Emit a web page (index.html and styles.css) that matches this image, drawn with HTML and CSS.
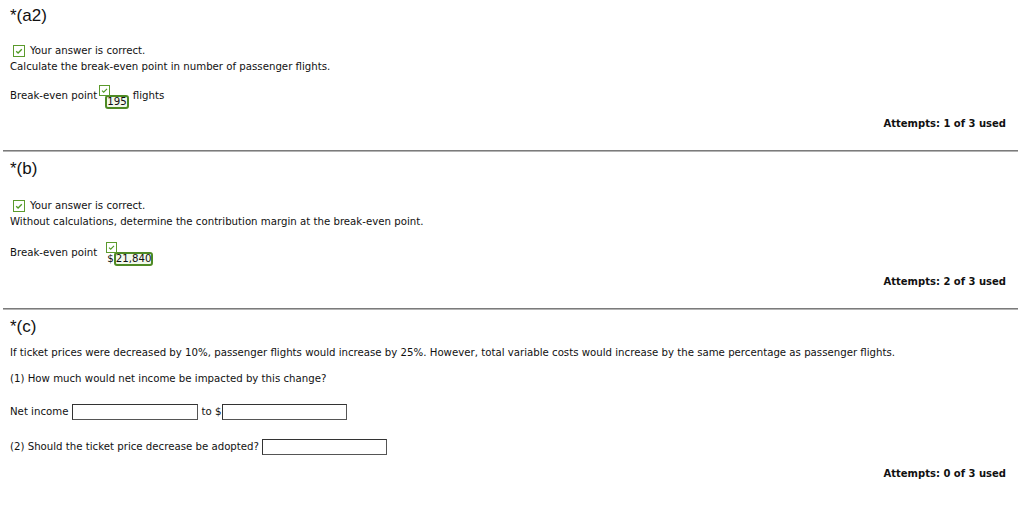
FILE: index.html
```html
<!DOCTYPE html>
<html>
<head>
<meta charset="utf-8">
<link rel="stylesheet" href="styles.css">
</head>
<body>
<div class="part part-a2">
  <h2 class="title">*(a2)</h2>
  <div class="feedback">
    <svg class="fb-check" width="12" height="12" viewBox="0 0 12 12"><rect x="0.5" y="0.5" width="11" height="11" fill="#fff" stroke="#5b9a2c"/><path d="M3.2 6.2 L5.1 8 L8.8 4.2" fill="none" stroke="#4f9a22" stroke-width="1.3"/></svg>
    <span>Your answer is correct.</span>
  </div>
  <div class="question">Calculate the break-even point in number of passenger flights.</div>
  <div class="answer-row"><span class="label">Break-even point</span><span class="ans ans-a2"><svg class="ans-check" width="11" height="11" viewBox="0 0 11 11"><rect x="0.5" y="0.5" width="10" height="10" fill="#fff" stroke="#5b9a2c"/><path d="M3 5.6 L4.7 7.2 L8 3.8" fill="none" stroke="#4f9a22" stroke-width="1.1"/></svg><span class="ans-box">195</span></span><span class="unit">flights</span></div>
  <div class="attempts">Attempts: 1 of 3 used</div>
</div>
<hr class="sep">
<div class="part part-b">
  <h2 class="title">*(b)</h2>
  <div class="feedback">
    <svg class="fb-check" width="12" height="12" viewBox="0 0 12 12"><rect x="0.5" y="0.5" width="11" height="11" fill="#fff" stroke="#5b9a2c"/><path d="M3.2 6.2 L5.1 8 L8.8 4.2" fill="none" stroke="#4f9a22" stroke-width="1.3"/></svg>
    <span>Your answer is correct.</span>
  </div>
  <div class="question">Without calculations, determine the contribution margin at the break-even point.</div>
  <div class="answer-row"><span class="label">Break-even point</span><span class="ans ans-b"><svg class="ans-check" width="11" height="11" viewBox="0 0 11 11"><rect x="0.5" y="0.5" width="10" height="10" fill="#fff" stroke="#5b9a2c"/><path d="M3 5.6 L4.7 7.2 L8 3.8" fill="none" stroke="#4f9a22" stroke-width="1.1"/></svg><span class="dollar">$</span><span class="ans-box">21,840</span></span></div>
  <div class="attempts">Attempts: 2 of 3 used</div>
</div>
<hr class="sep">
<div class="part part-c">
  <h2 class="title">*(c)</h2>
  <div class="para p1">If ticket prices were decreased by 10%, passenger flights would increase by 25%. However, total variable costs would increase by the same percentage as passenger flights.</div>
  <div class="para p2">(1) How much would net income be impacted by this change?</div>
  <div class="input-row r1"><span>Net income</span><span class="field f-a"></span><span>to $</span><span class="field f-b"></span></div>
  <div class="input-row r2"><span>(2) Should the ticket price decrease be adopted?</span><span class="field f-c"></span></div>
  <div class="attempts">Attempts: 0 of 3 used</div>
</div>
</body>
</html>
```
FILE: styles.css
```css
html, body {
  margin: 0;
  padding: 0;
  background: #fff;
}
body {
  font-family: "DejaVu Sans", Verdana, sans-serif;
  font-size: 10.2px;
  line-height: 16px;
  color: #111;
}
.part {
  padding: 0 18px 0 10px;
}
.title {
  margin: 0;
  font-family: "Liberation Sans", Arial, sans-serif;
  font-weight: normal;
  font-size: 17px;
  line-height: 20px;
  color: #111;
}
.part-a2 .title { padding-top: 6px; }
.part-b .title, .part-c .title { padding-top: 7px; }

.feedback {
  height: 16px;
  padding-left: 3px;
  display: flex;
  align-items: center;
  gap: 5px;
}
.part-a2 .feedback { margin-top: 17px; }
.part-b .feedback { margin-top: 19px; }

.question { height: 16px; }

.answer-row {
  height: 16px;
  white-space: nowrap;
}
.part-a2 .answer-row { margin-top: 13px; }
.part-b .answer-row { margin-top: 15px; }

.ans {
  position: relative;
  display: inline-block;
  vertical-align: -6px;
  line-height: 12px;
}
.ans-a2 { margin-left: 8px; margin-right: 4px; }
.ans-b { margin-left: 10px; }
.ans-check {
  position: absolute;
  left: -6px;
  top: -10px;
  z-index: 2;
}
.ans-b .ans-check { left: -1px; top: -10px; }
.ans-box {
  display: inline-block;
  border: 2px solid #4e8a24;
  border-radius: 3px;
  background: #f2f8ec;
  padding: 0;
  line-height: 10px;
  color: #111;
}
.dollar { color: #111; }

.attempts {
  height: 16px;
  text-align: right;
  font-weight: bold;
  font-size: 10px;
  color: #111;
}
.part-a2 .attempts { margin-top: 12px; }
.part-b .attempts { margin-top: 13px; }
.part-c .attempts { margin-top: 11px; }

.sep {
  margin: 18px 6px 0 3px;
  height: 0;
  border: 0;
  border-top: 1px solid #7b7b7b;
  border-bottom: 1px solid #b3b3b3;
}

.para { height: 16px; white-space: nowrap; }
.p1 { margin-top: 8px; }
.p2 { margin-top: 10px; }

.input-row {
  height: 16px;
  line-height: 16px;
  white-space: nowrap;
  display: flex;
  align-items: center;
}
.r1 { margin-top: 17px; }
.r2 { margin-top: 19px; }
.field {
  display: inline-block;
  box-sizing: border-box;
  height: 16px;
  border: 1px solid #333;
  border-right-color: #555;
  border-bottom-color: #555;
  background: #fff;
}
.f-a { width: 126px; margin-left: 4px; margin-right: 3px; }
.f-b { width: 125px; margin-left: 1px; }
.f-c { width: 125px; margin-left: 3px; }
```
